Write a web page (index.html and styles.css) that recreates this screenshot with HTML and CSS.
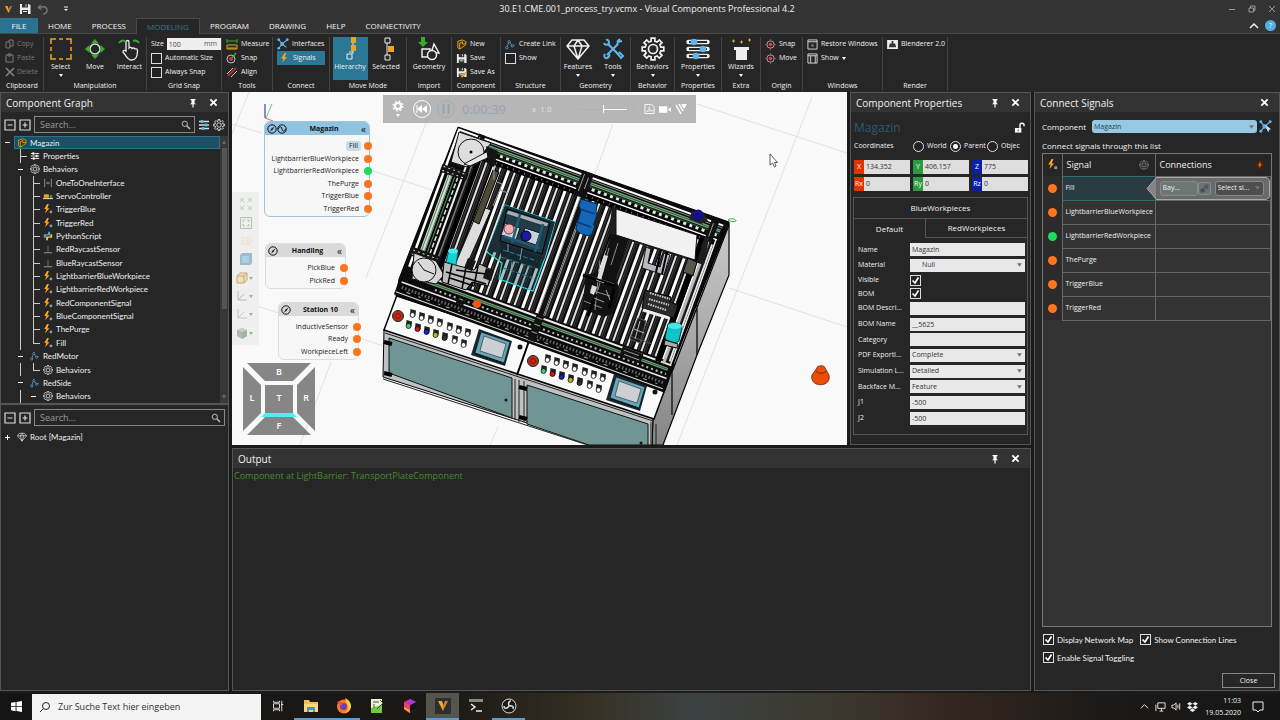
FILE: index.html
```html
<!DOCTYPE html>
<html lang="en">
<head>
    <meta charset="UTF-8">
    <meta name="viewport" content="width=device-width, initial-scale=1.0">
    <title>30.E1.CME.001_process_try.vcmx - Visual Components Professional 4.2</title>
    <link rel="stylesheet" href="styles.css">
</head>
<body>
    <!-- shared icons -->
    <svg class="defs" aria-hidden="true">
        <symbol id="i-pin" viewBox="0 0 10 10"><path d="M2.500 1h5v1l-1 .5V5L8 6.200H2L3.500 5V2.500l-1-.5z" fill="#fff"/><path d="M5 6v3.500" stroke="#fff" stroke-width="1.200"/></symbol>
        <symbol id="i-close" viewBox="0 0 10 10"><path d="M1.500 1.500l7 7M8.500 1.500l-7 7" stroke="#fff" stroke-width="2"/></symbol>
        <symbol id="i-minus" viewBox="0 0 12 12"><path d="M1 1h10v10H1zM3.500 6h5" fill="none" stroke="#ddd" stroke-width="1.200"/></symbol>
        <symbol id="i-plus" viewBox="0 0 12 12"><path d="M1 1h10v10H1zM3.500 6h5M6 3.500v5" fill="none" stroke="#ddd" stroke-width="1.200"/></symbol>
        <symbol id="i-search" viewBox="0 0 10 10"><circle cx="3.800" cy="3.800" r="2.600" fill="none" stroke="#bbb"/><path d="M5.800 5.800L9 9" stroke="#bbb" stroke-width="1.500"/></symbol>
        <symbol id="i-gear" viewBox="0 0 24 24"><path d="M19.800 10.100L22.800 10.100 22.800 13.900 19.800 13.900 18.900 16.200 21 18.300 18.300 21 16.200 18.900 13.900 19.800 13.900 22.800 10.100 22.800 10.100 19.800 7.800 18.900 5.700 21 3 18.300 5.100 16.200 4.200 13.900 1.200 13.900 1.200 10.100 4.200 10.100 5.100 7.800 3 5.700 5.700 3 7.800 5.100 10.100 4.200 10.100 1.200 13.900 1.200 13.900 4.200 16.200 5.100 18.300 3 21 5.700 18.900 7.800z" fill="none" stroke="currentColor" stroke-width="1.700"/><circle cx="12" cy="12" r="4.500" fill="none" stroke="currentColor" stroke-width="1.700"/></symbol>
        <symbol id="i-sliders" viewBox="0 0 24 24"><path d="M2.500 5h19M2.500 12h19M2.500 19h19" stroke="#eee" stroke-width="4.500" stroke-linecap="round"/><path d="M3 5h18M3 12h18M3 19h18" stroke="#2a2a2a" stroke-width="1.800"/><circle cx="8" cy="5" r="3.300" fill="#5eb5ec"/><circle cx="17" cy="12" r="3.300" fill="#5eb5ec"/><circle cx="10" cy="19" r="3.300" fill="#5eb5ec"/></symbol>
        <symbol id="i-filter" viewBox="0 0 12 12"><path d="M1 2.500h10M1 6h10M1 9.500h10" stroke="#ddd" stroke-width="1.300"/><path d="M4 1v3M8 4.500v3M5 8v3" stroke="#5eb5ec" stroke-width="2.500"/></symbol>
        <symbol id="i-props" viewBox="0 0 12 12"><path d="M1 3h10M1 6h10M1 9h10" stroke="#ddd" stroke-width="1.200"/><path d="M4 1.500v3M8 4.500v3M4.500 7.500v3" stroke="#fff" stroke-width="2"/></symbol>
        <symbol id="i-part" viewBox="0 0 12 12"><path d="M2 2.500L7 1l4 2-.5 3.500L7 9 4 11l-2-1.500z" fill="#3b3210" stroke="#e5a91f"/><path d="M4 11V4.500l3-1.500v2.500h3.500" fill="none" stroke="#e5a91f"/></symbol>
        <symbol id="i-bolt" viewBox="0 0 12 12"><path d="M5.500 0L1.500 6.500h2.800L2.500 11.500l6-6.500H5.400L7.500 0z" fill="#ffa51f"/></symbol>
        <symbol id="i-sig" viewBox="0 0 12 12"><path d="M5 0L1.500 6h2.500L2.500 11l5.200-6H5.200L7 0z" fill="#ffa51f"/><path d="M8 8h3v3H8z" fill="#999"/></symbol>
        <symbol id="i-link" viewBox="0 0 12 12"><path d="M2 9l2.500-6L8 7.500l2.500-1" fill="none" stroke="#8aa" stroke-width=".8"/><g fill="#222" stroke="#4a9bd0"><circle cx="2" cy="9.500" r="1.300"/><circle cx="4.500" cy="3" r="1.300"/><circle cx="8" cy="7.500" r="1.300"/></g></symbol>
        <symbol id="i-iface" viewBox="0 0 12 12"><path d="M2 1v10M10 1v10" stroke="#888" stroke-width="1.200"/><path d="M4 6h4M5 4.500v3M7 4.500v3" stroke="#58a4d8" stroke-width=".8"/></symbol>
        <symbol id="i-servo" viewBox="0 0 12 12"><path d="M1 4h6v4H1z" fill="#f0a522"/><path d="M8 5h3v3H8z" fill="#3da03a"/><path d="M0 9h12" stroke="#ccc" stroke-width="1.500"/></symbol>
        <symbol id="i-python" viewBox="0 0 12 12"><path d="M6 1h2.500v4.500H3.500V8H1V4h5z" fill="#4d9fd8"/><path d="M6 11H3.800V6.500h5V4H11v4H6z" fill="#f5c242"/></symbol>
        <symbol id="i-ray" viewBox="0 0 12 12"><path d="M6 2v8" stroke="#777"/><path d="M1 10.500h10" stroke="#aaa"/></symbol>
        <symbol id="i-gem" viewBox="0 0 24 24"><path d="M6 3h12l5 6-11 13L1 9zM1 9h22M8 9l4 13 4-13M8 9l4-6 4 6" fill="none" stroke="currentColor" stroke-width="1.500" stroke-linejoin="round"/></symbol>
        <symbol id="i-net" viewBox="0 0 14 14"><path d="M2 2l4 5M12 2L6 7M6 7l-4 5M6 7l5 4" stroke="#5eb5ec" stroke-width="1.300"/><g fill="#5eb5ec"><circle cx="2" cy="2" r="1.600"/><circle cx="12" cy="2" r="1.600"/><circle cx="2" cy="12" r="1.600"/><circle cx="6" cy="7" r="2.300"/></g></symbol>
        <symbol id="i-save" viewBox="0 0 12 12"><path d="M1 1h9l1.500 1.500V11H1z" fill="#eee"/><path d="M3 1h6v3.500H3zM3 7h6v4H3z" fill="#333"/><path d="M7 1.500v2M4 8.500h4" stroke="#eee"/></symbol>
        <symbol id="i-target" viewBox="0 0 12 12"><circle cx="6" cy="6" r="4" fill="none" stroke="#aaa"/><circle cx="6" cy="6" r="2" fill="#d2424c"/><path d="M6 0v3M6 9v3M0 6h3M9 6h3" stroke="#c85058" stroke-width=".8"/></symbol>
        <symbol id="i-compass" viewBox="0 0 10 10"><circle cx="5" cy="5" r="4.200" fill="none" stroke="#111"/><path d="M7.500 2.500L5.500 6 3 7.500 4.500 4.500z" fill="#222"/></symbol>
    </svg>

    <header class="titlebar">
        <div class="quick">
            <svg width="9" height="9" viewBox="0 0 10 10"><path d="M1 1h3l2 6-1 2z" fill="#e8a020"/><path d="M6 7l3-6H7L5 5z" fill="#c8762a"/></svg>
            <button class="icon-btn" aria-label="Save"><svg width="12" height="12"><use href="#i-save"/></svg></button>
            <button class="icon-btn" aria-label="Undo"><svg width="11" height="11" viewBox="0 0 12 12"><path d="M4 1L1.500 4 5 6M2 4c5-2 9-1 9 3 0 2-2 3.500-4.500 4" fill="none" stroke="#777" stroke-width="1.500"/></svg></button>
            <button class="icon-btn more" aria-label="More"><svg width="6" height="6" viewBox="0 0 6 6"><path d="M1 1h4" stroke="#eee"/><path d="M1 3h4L3 5z" fill="#eee"/></svg></button>
        </div>
        <div class="doc-title">30.E1.CME.001_process_try.vcmx - Visual Components Professional 4.2</div>
        <div class="win-btns">
            <button class="icon-btn" aria-label="Minimize"><svg width="8" height="8" viewBox="0 0 8 8"><path d="M1 4.500h6" stroke="#999"/></svg></button>
            <button class="icon-btn" aria-label="Restore"><svg width="8" height="8" viewBox="0 0 8 8"><path d="M1 3h4.500v4H1zM2.500 3V1H7v4.500H5.500" fill="none" stroke="#999"/></svg></button>
            <button class="icon-btn" aria-label="Close window"><svg width="8" height="8" viewBox="0 0 8 8"><path d="M1 1l6 6M7 1L1 7" stroke="#999"/></svg></button>
        </div>
    </header>

    <nav class="tabs">
        <button class="file">FILE</button>
        <button>HOME</button>
        <button>PROCESS</button>
        <button class="active">MODELING</button>
        <button>PROGRAM</button>
        <button>DRAWING</button>
        <button>HELP</button>
        <button>CONNECTIVITY</button>
        <div class="help">
            <svg width="10" height="8" viewBox="0 0 10 8"><path d="M1 6l4-4 4 4" fill="none" stroke="#eee" stroke-width="1.500"/></svg>
            <span class="q">?</span>
        </div>
    </nav>

    <div class="ribbon">
        <section class="group">
            <div class="rows disabled">
                <button class="small" disabled><svg width="10" height="10" viewBox="0 0 10 10"><path d="M1 3h4v6H1zM4 3V1h4v6H5" fill="none" stroke="#777"/></svg>Copy</button>
                <button class="small" disabled><svg width="10" height="10" viewBox="0 0 10 10"><path d="M1 2h7v7H1zM3 1h3v2H3z" fill="none" stroke="#777"/></svg>Paste</button>
                <button class="small" disabled><svg width="10" height="10" viewBox="0 0 10 10"><path d="M1 1l8 8M9 1L1 9" stroke="#888" stroke-width="1.500"/></svg>Delete</button>
            </div>
            <h3>Clipboard</h3>
        </section>
        <section class="group">
            <div class="bigs">
                <button class="big"><svg viewBox="0 0 24 24"><path d="M2 7V2h5M10 2h4M17 2h5v5M22 10v4M22 17v5h-5M14 22h-4M7 22H2v-5M2 14v-4" fill="none" stroke="#f0a522" stroke-width="1.500"/></svg>Select<i class="caret"></i></button>
                <button class="big"><svg viewBox="0 0 24 24"><circle cx="12" cy="12" r="5" fill="none" stroke="#ddd" stroke-width="1.500"/><path d="M12 2l4 4.500H8zM12 22l4-4.500H8zM2 12l4.500-4v8zM22 12l-4.500-4v8z" fill="#35ac2c"/></svg>Move</button>
                <button class="big"><svg viewBox="0 0 24 24"><path d="M9 14V5c0-2 3-2 3 0v6c1-1 2.500-1 3 .5 1-1 2.500-.5 3 .5 1.500-.5 2.500 0 2.500 2 0 6-2 9-6 9-4 0-5-4-8.500-8 0-2 2-2 3-1z" fill="none" stroke="#eee" stroke-width="1.300"/><path d="M2 6c2-3 4-3 6-2M22 6c-2-3-4-3-6-2" fill="none" stroke="#35ac2c" stroke-width="2"/></svg>Interact</button>
            </div>
            <h3>Manipulation</h3>
        </section>
        <section class="group">
            <div class="rows">
                <label class="small size">Size<input type="text" value="100"><span class="unit">mm</span></label>
                <label class="small"><input type="checkbox">Automatic Size</label>
                <label class="small"><input type="checkbox">Always Snap</label>
            </div>
            <h3>Grid Snap</h3>
        </section>
        <section class="group">
            <div class="rows">
                <button class="small"><svg width="12" height="12" viewBox="0 0 12 12"><path d="M1 3h10M1 1v4M11 1v4" stroke="#35ac2c"/><path d="M1 7h10v4H1zM3 9v2M5 9v2M7 9v2M9 9v2" fill="none" stroke="#e5a91f"/></svg>Measure</button>
                <button class="small"><svg width="12" height="12" viewBox="0 0 12 12"><circle cx="5" cy="7" r="4" fill="none" stroke="#bbb"/><circle cx="5" cy="7" r="2" fill="#d22f3c"/><path d="M6 6l4-5" stroke="#35ac2c" stroke-width="1.500"/></svg>Snap</button>
                <button class="small"><svg width="12" height="12" viewBox="0 0 12 12"><path d="M1 8l6-6M5 11l6-6" stroke="#ccc"/><path d="M2 10l8-8" stroke="#d22f3c" stroke-width="1.500"/></svg>Align</button>
            </div>
            <h3>Tools</h3>
        </section>
        <section class="group">
            <div class="rows">
                <button class="small"><svg width="12" height="12"><use href="#i-net"/></svg>Interfaces</button>
                <button class="small on"><svg width="10" height="10"><use href="#i-bolt"/></svg>Signals</button>
            </div>
            <h3>Connect</h3>
        </section>
        <section class="group">
            <div class="bigs">
                <button class="big on"><svg viewBox="0 0 24 24"><path d="M15 2v15M15 15h-4" stroke="#eee"/><path d="M13 0h5v6h-5zM13 8h5v6h-5z" fill="#f0a522"/><path d="M9 17h5v5H9z" fill="#2a7796" stroke="#eee"/></svg>Hierarchy</button>
                <button class="big"><svg viewBox="0 0 24 24"><path d="M13 5v14" stroke="#eee"/><path d="M11 1h5v5h-5zM11 18h5v5h-5z" fill="#262626" stroke="#eee"/><path d="M14 9h6v6h-6z" fill="#f0a522"/></svg>Selected</button>
            </div>
            <h3>Move Mode</h3>
        </section>
        <section class="group">
            <div class="bigs">
                <button class="big"><svg viewBox="0 0 24 24"><path d="M4 0h4v5h3L6 10 1 5h3z" fill="#35ac2c"/><path d="M5 12h8v8H5z" fill="#262626" stroke="#eee" stroke-width="1.500"/><path d="M17 7l5 9h-8z" fill="none" stroke="#eee" stroke-width="1.500"/><circle cx="15" cy="18" r="4.500" fill="#262626" stroke="#eee" stroke-width="1.500"/></svg>Geometry</button>
            </div>
            <h3>Import</h3>
        </section>
        <section class="group">
            <div class="rows">
                <button class="small"><svg width="11" height="11"><use href="#i-part"/></svg>New</button>
                <button class="small"><svg width="11" height="11"><use href="#i-save"/></svg>Save</button>
                <button class="small"><svg width="11" height="11" viewBox="0 0 12 12"><use href="#i-save" width="12" height="12"/><path d="M6 11l5-5" stroke="#e5a91f" stroke-width="2"/></svg>Save As</button>
            </div>
            <h3>Component</h3>
        </section>
        <section class="group">
            <div class="rows">
                <button class="small"><svg width="11" height="11"><use href="#i-link"/></svg>Create Link</button>
                <label class="small"><input type="checkbox">Show</label>
            </div>
            <h3>Structure</h3>
        </section>
        <section class="group">
            <div class="bigs">
                <button class="big"><svg><use href="#i-gem"/></svg>Features<i class="caret"></i></button>
                <button class="big"><svg viewBox="0 0 24 24"><path d="M7 7l11 11M17 7L6 18" stroke="#5eb5ec" stroke-width="2.200"/><path d="M3 6c1 3 5 2 5-1 0-2-2-2.500-3-2M21 4l-4 1-1 3M19 2l-3 3M4 17c-2 2 0 5 2 4s3-2 2-4M16 16l4 5 2-2-4-4" fill="none" stroke="#5eb5ec" stroke-width="2"/></svg>Tools<i class="caret"></i></button>
            </div>
            <h3>Geometry</h3>
        </section>
        <section class="group">
            <div class="bigs"><button class="big"><svg><use href="#i-gear"/></svg>Behaviors<i class="caret"></i></button></div>
            <h3>Behavior</h3>
        </section>
        <section class="group">
            <div class="bigs"><button class="big"><svg><use href="#i-sliders"/></svg>Properties<i class="caret"></i></button></div>
            <h3>Properties</h3>
        </section>
        <section class="group">
            <div class="bigs"><button class="big"><svg viewBox="0 0 24 24"><path d="M5 10h15v3h-2v10H7V13H5z" fill="#eee"/><path d="M3 4h3M4.500 2.500v3M11 5h3M12.500 3.500v3M19 3h3M20.500 1.500v3" stroke="#e5a91f"/></svg>Wizards<i class="caret"></i></button></div>
            <h3>Extra</h3>
        </section>
        <section class="group">
            <div class="rows">
                <button class="small"><svg width="11" height="11"><use href="#i-target"/></svg>Snap</button>
                <button class="small"><svg width="11" height="11"><use href="#i-target"/></svg>Move</button>
            </div>
            <h3>Origin</h3>
        </section>
        <section class="group">
            <div class="rows">
                <button class="small"><svg width="11" height="11" viewBox="0 0 12 12"><path d="M1 1h10v10H1zM1 3h10" fill="none" stroke="#ddd"/><path d="M4 7l3-2v4z" fill="#35ac2c"/></svg>Restore Windows</button>
                <button class="small"><svg width="11" height="11" viewBox="0 0 12 12"><path d="M1 1h10v10H1zM1 3h10M4 3v8M9 3v8" fill="none" stroke="#ddd"/></svg>Show<i class="caret"></i></button>
            </div>
            <h3>Windows</h3>
        </section>
        <section class="group">
            <div class="rows">
                <button class="small"><svg width="11" height="9" viewBox="0 0 12 10"><path d="M0 0h12v10H0z" fill="#eee"/><path d="M2 8l1-4h6l1 4z" fill="#333"/><path d="M6 1v5" stroke="#333" stroke-width="2"/></svg>Blenderer 2.0</button>
            </div>
            <h3>Render</h3>
        </section>
    </div>

    <main class="workspace">
        <div class="left">
            <section class="panel graph">
                <header><h2>Component Graph</h2>
                    <button class="icon-btn" aria-label="Pin"><svg width="10" height="10"><use href="#i-pin"/></svg></button>
                    <button class="icon-btn" aria-label="Close"><svg width="9" height="9"><use href="#i-close"/></svg></button>
                </header>
                <div class="searchbar">
                    <button class="icon-btn" aria-label="Collapse"><svg width="12" height="12"><use href="#i-minus"/></svg></button>
                    <button class="icon-btn" aria-label="Expand"><svg width="12" height="12"><use href="#i-plus"/></svg></button>
                    <label class="search"><input type="text" placeholder="Search..."><svg width="10" height="10"><use href="#i-search"/></svg></label>
                    <svg width="12" height="12"><use href="#i-filter"/></svg>
                    <svg width="12" height="12"><use href="#i-gear"/></svg>
                </div>
                <div class="tree-wrap">
                    <ul class="tree">
                        <li class="selected"><button class="tg" aria-label="Collapse"></button><span><svg><use href="#i-part"/></svg>Magazin</span></li>
                        <li><i></i><i class="t"></i><span><svg><use href="#i-props"/></svg>Properties</span></li>
                        <li><i></i><button class="tg" aria-label="Collapse"></button><span><svg><use href="#i-gear"/></svg>Behaviors</span></li>
                        <li><i></i><i class="v"></i><i class="t"></i><span><svg><use href="#i-iface"/></svg>OneToOneInterface</span></li>
                        <li><i></i><i class="v"></i><i class="t"></i><span><svg><use href="#i-servo"/></svg>ServoController</span></li>
                        <li><i></i><i class="v"></i><i class="t"></i><span><svg><use href="#i-sig"/></svg>TriggerBlue</span></li>
                        <li><i></i><i class="v"></i><i class="t"></i><span><svg><use href="#i-sig"/></svg>TriggerRed</span></li>
                        <li><i></i><i class="v"></i><i class="t"></i><span><svg><use href="#i-python"/></svg>PythonScript</span></li>
                        <li><i></i><i class="v"></i><i class="t"></i><span><svg><use href="#i-ray"/></svg>RedRaycastSensor</span></li>
                        <li><i></i><i class="v"></i><i class="t"></i><span><svg><use href="#i-ray"/></svg>BlueRaycastSensor</span></li>
                        <li><i></i><i class="v"></i><i class="t"></i><span><svg><use href="#i-sig"/></svg>LightbarrierBlueWorkpiece</span></li>
                        <li><i></i><i class="v"></i><i class="t"></i><span><svg><use href="#i-sig"/></svg>LightbarrierRedWorkpiece</span></li>
                        <li><i></i><i class="v"></i><i class="t"></i><span><svg><use href="#i-sig"/></svg>RedComponentSignal</span></li>
                        <li><i></i><i class="v"></i><i class="t"></i><span><svg><use href="#i-sig"/></svg>BlueComponentSignal</span></li>
                        <li><i></i><i class="v"></i><i class="t"></i><span><svg><use href="#i-sig"/></svg>ThePurge</span></li>
                        <li><i></i><i class="v"></i><i class="l"></i><span><svg><use href="#i-sig"/></svg>Fill</span></li>
                        <li><i></i><button class="tg" aria-label="Collapse"></button><span><svg><use href="#i-link"/></svg>RedMotor</span></li>
                        <li><i></i><i class="v"></i><i class="l"></i><span><svg><use href="#i-gear"/></svg>Behaviors</span></li>
                        <li><i></i><button class="tg" aria-label="Collapse"></button><span><svg><use href="#i-link"/></svg>RedSide</span></li>
                        <li><i></i><i class="v"></i><button class="tg" aria-label="Collapse"></button><span><svg><use href="#i-gear"/></svg>Behaviors</span></li>
                    </ul>
                    <div class="scroll"><i class="up"></i><div class="thumb"></div><i class="down"></i></div>
                </div>
            </section>
            <section class="panel roots">
                <div class="searchbar">
                    <button class="icon-btn" aria-label="Collapse"><svg width="12" height="12"><use href="#i-minus"/></svg></button>
                    <button class="icon-btn" aria-label="Expand"><svg width="12" height="12"><use href="#i-plus"/></svg></button>
                    <label class="search"><input type="text" placeholder="Search..."><svg width="10" height="10"><use href="#i-search"/></svg></label>
                </div>
                <ul class="tree short">
                    <li><button class="tg plus" aria-label="Expand"></button><span><svg><use href="#i-gem"/></svg>Root [Magazin]</span></li>
                </ul>
            </section>
        </div>

        <section class="viewport">
            <svg class="scene" viewBox="232 92 615 353" preserveAspectRatio="xMidYMid slice">
                <defs>
                    <!-- aluminium slats of the table top -->
                    <pattern id="slats" width="15" height="40" patternUnits="userSpaceOnUse">
                        <rect width="15" height="40" fill="#080808"/>
                        <rect x="1" width="3" height="40" fill="#fff"/>
                        <rect x="5.500" width=".8" height="40" fill="#666"/>
                        <rect x="8" width="2" height="40" fill="#e4e4e4"/>
                        <rect x="11.500" width=".6" height="40" fill="#777"/>
                        <rect x="13.300" width=".5" height="40" fill="#555"/>
                    </pattern>
                    <linearGradient id="side" x1="0" y1="0" x2="0" y2="1"><stop offset="0" stop-color="#cdcdcd"/><stop offset="1" stop-color="#858585"/></linearGradient>
                    <g id="btn"><path d="M-2.500-4l5.500 1.500-.5 5-5.500-1z" fill="#222"/><circle cx="-.5" cy="2" r="2.400" fill="#fff" stroke="#000" stroke-width=".8"/></g>
                    <g id="lamp"><path d="M-2.500-4l5.500 1.500-.5 5-5.500-1z" fill="#222" stroke="none"/><circle cx="-.5" cy="2" r="2.500" stroke="#000" stroke-width=".7"/></g>
                    <g id="console">
                        <circle cx="398" cy="316" r="5.500" fill="#a3381f" stroke="#222"/><circle cx="398" cy="316" r="2.500" fill="#e01c14" stroke="#600" stroke-width=".6"/>
                        <use href="#btn" x="413" y="313"/><use href="#btn" x="422" y="316"/><use href="#btn" x="431" y="319"/><use href="#btn" x="440" y="322"/><use href="#btn" x="450" y="326"/><use href="#btn" x="459" y="329"/><use href="#btn" x="468" y="332"/>
                        <use href="#lamp" x="409" y="324" fill="#3fd070"/><use href="#lamp" x="418" y="327" fill="#e01010"/><use href="#lamp" x="427" y="330" fill="#1424c0"/><use href="#lamp" x="436" y="333" fill="#b8ba20"/><use href="#lamp" x="445" y="336" fill="#333"/><use href="#btn" x="455" y="339"/><use href="#btn" x="464" y="343"/>
                        <path d="M479 329l33 12-7 25-34-11z" fill="#152a30"/>
                        <path d="M481 332l29 10-6 21-29-10z" fill="#69a6ba" stroke="#000" stroke-width=".6"/>
                        <path d="M484 336l22 8-4 14-22-7z" fill="#ccd0d2" stroke="#222" stroke-width=".6"/>
                        <path d="M476 354l27 9" stroke="#111" stroke-width="1.500" stroke-dasharray="2 1.500"/>
                        <circle cx="520" cy="347" r="2.500" fill="#111"/>
                    </g>
                </defs>
                <rect x="232" y="92" width="615" height="353" fill="#f9f9f9"/>
                <g stroke="#dadada" stroke-width=".8" fill="none">
                    <path d="M249 92l-17 42M232 124l30 9M428 118l-62 160M370 170l62 20M331 362l-31 83M613 124l-18 50M812 97L677 445M697 104l150 49M729 288l118 39M232 298l56 18M362 339l22 7M498 427l-8 18"/>
                </g>
                <path d="M265 104v14" stroke="#1c1c9c"/><path d="M266 118l6-14" stroke="#49c049" stroke-width=".8"/><path d="M265 118l8 3" stroke="#d44" stroke-width=".8"/>

                <!-- cabinet -->
                <path d="M729 222v53l-32 80-34 90h-11l1-28 12-32 7-20z" fill="url(#side)" stroke="#000" stroke-width="1.200"/>
                <path d="M697 305v50M672 370v45M672 372l57-147" stroke="#000" stroke-width="1.200"/>
                <path d="M384 329l269 88-1 28h-56L383 377z" fill="#bfc2c2" stroke="#000"/>
                <path d="M389 338l123 40v40L389 373z" fill="#6f9694" stroke="#111"/>
                <path d="M527 385l121 39v21h-59l-62-21z" fill="#6f9694" stroke="#111"/>
                <path d="M515 379v41M519 380v42M524 381v41M651 422v23M656 424v21" stroke="#222" stroke-width="1"/>
                <path d="M385 333l268 88M383 379l214 69" stroke="#222" stroke-width="1"/>
                <path d="M384 342l8 2M384 373l8 2M519 387l8 2M519 417l8 2" stroke="#000" stroke-width="4"/>
                <circle cx="506" cy="400" r="1.500" fill="#111"/><circle cx="641" cy="443" r="1.500" fill="#111"/>

                <path d="M397 295L384 330l270 89 14-38z" fill="#fafafa" stroke="#000" stroke-width="1.500"/>
                <path d="M529 341l-12 34" stroke="#000" stroke-width="2"/>
                <use href="#console"/>
                <use href="#console" x="135" y="45"/>

                <!-- table top -->
                <path d="M458 127l271 95-59 150-4 14-270-90 3-17z" fill="#0b0b0b" stroke="#000"/>
                <g transform="translate(458 127) rotate(20)">
                    <rect x="26" y="20" width="256" height="136" fill="url(#slats)"/>
                    <path d="M142 18v140" stroke="#111" stroke-width="5"/><path d="M139 20v134M146 20v134" stroke="#999"/>
                    <!-- back rail -->
                    <path d="M1 2h282" stroke="#fff" stroke-width="2"/>
                    <path d="M1 4.500h282" stroke="#aaa" stroke-width=".7"/>
                    <path d="M24 8h258" stroke="#7aaa84" stroke-width="3"/>
                    <path d="M24 8h258" stroke="#1f4528" stroke-width=".7"/>
                    <path d="M30 13h250" stroke="#e8e8e8" stroke-width="3" stroke-dasharray="3 3.500"/>
                    <path d="M24 17.500h258" stroke="#fff" stroke-width="1.500"/>
                    <path d="M24 11h258" stroke="#2d5e38" stroke-width="1"/>
                    <path d="M26 21h256" stroke="#000" stroke-width="5"/>
                    <path d="M30 21h250" stroke="#777" stroke-width="2" stroke-dasharray="1 5"/>
                    <path d="M132 -2h12v26h-12zM22 -1h7v26h-7zM270 0h8v22h-8z" fill="#111"/>
                    <path d="M135 1v18M140 3v12M24 2v18M273 3v14" stroke="#ccc" stroke-width=".7"/>
                    <!-- left rail -->
                    <path d="M2 2v160" stroke="#fff" stroke-width="2.500"/>
                    <path d="M9 40v96" stroke="#d9d9d9" stroke-width="5"/>
                    <path d="M8 40v96M11 40v96M14 40v96" stroke="#4f8d5c" stroke-width="1"/>
                    <path d="M17 40v96" stroke="#ddd" stroke-width="1.500" stroke-dasharray="5 2"/>
                    <path d="M21 30v118" stroke="#eee" stroke-width="2"/>
                    <path d="M26 24v130" stroke="#777" stroke-width="1.500"/>
                    <path d="M31 24v128" stroke="#000" stroke-width="5"/>
                    <path d="M-2 40h28v8H-2zM-3 128h32v9H-3z" fill="#151515"/>
                    <path d="M0 42h24M0 46h22M0 131h26M0 135h22" stroke="#ddd" stroke-width="1" stroke-dasharray="2 3"/>
                    <!-- front rails -->
                    <rect x="-3" y="148" width="288" height="31" fill="#0b0b0b"/>
                    <path d="M30 151h252" stroke="#eee" stroke-width="2"/>
                    <path d="M18 156h262" stroke="#73a27b" stroke-width="3"/>
                    <path d="M18 156h262" stroke="#1f4528" stroke-width=".7"/>
                    <path d="M34 161h246" stroke="#bbb" stroke-width="2" stroke-dasharray="2 3"/>
                    <path d="M0 165h282" stroke="#e9e9e9" stroke-width="1.500"/>
                    <path d="M2 170h280" stroke="#666" stroke-width="3" stroke-dasharray="1.500 2"/>
                    <path d="M8 173h272" stroke="#aaa" stroke-width="1" stroke-dasharray="4 9 2 6"/>
                    <path d="M-2 176h284" stroke="#ddd" stroke-width="1"/>
                    <path d="M138 148h8v28h-8zM58 158h8v8h-8zM230 150h22v10h-22z" fill="#111"/>
                    <path d="M139 152h6M139 159h6M139 167h6M60 161h4M232 153h16M234 157h16" stroke="#999"/>
                    <!-- right rails -->
                    <path d="M268 22v130" stroke="#000" stroke-width="6"/>
                    <path d="M274 22v130" stroke="#bcbcbc" stroke-width="3"/><path d="M281 18v132" stroke="#eee" stroke-width="1.500"/>
                </g>

                <!-- deflection wheels -->
                <path d="M459 132l32 11-8 10-16 14-16-5z" fill="#dcdcdc" stroke="#111"/>
                <circle cx="471" cy="152" r="13" fill="#dedede" stroke="#111"/><circle cx="471" cy="152" r="1.500"/>
                <path d="M464 164l28-15 4 5-26 12z" fill="#e8e8e8" stroke="#111"/>
                <path d="M414 253l22 8 8 14-8 9-24-5z" fill="#d6d6d6" stroke="#111"/>
                <circle cx="424" cy="270" r="12" fill="#dadada" stroke="#111"/><path d="M418 262l6 8 10 4" fill="none" stroke="#111"/>

                <!-- pneumatic parts on the left side -->
                <path d="M480 206l11 4-30 68-10-4z" fill="#ddd" stroke="#111"/>
                <path d="M493 170l6 2-20 52-6-3z" fill="#4d4a38" stroke="#000"/>
                <path d="M494 154v26M497 182l5 2-9 22M500 190l8 3" fill="none" stroke="#999"/>
                <path d="M486 146l12 5-4 16-6-3z" fill="#141414"/>
                <path d="M444 262l30 8 6-6 12 6-4 16-16-4-6 8-24-8z" fill="#bbb" stroke="#000"/>
                <path d="M446 272l40 12M452 264l-4 20M466 267l-4 22M478 266l-4 20M456 270l30 4M450 278l24 8" stroke="#000" stroke-width="1.500"/>
                <path d="M468 258l8 3-4 10-8-3zM486 268l8 3-3 10-8-3z" fill="#161616"/>
                <path d="M449 250l9 2-2 13-10-3z" fill="#12d2d8" stroke="#066"/>
                <ellipse cx="453" cy="251" rx="5" ry="2.500" fill="#4de8ec"/>

                <!-- selected gripper plate -->
                <path d="M505 205l50 17-9 33-13 36-34-12 3-16-15-11z" fill="#0d3a48" fill-opacity=".35" stroke="#1fdfe8" stroke-width="1.200"/>
                <path d="M505 205l50 17-11 38-57-9z" fill="#1d2d38"/>
                <path d="M507 209l43 14-8 31-42-13z" fill="#223c4a" stroke="#000"/>
                <path d="M508 210l41 13-2 4-41-13z" fill="#9fb0b8" stroke="#111" stroke-width=".7"/>
                <path d="M505 223l15 5-4 12-15-5zM525 228l15 5-4 12-15-5z" fill="#c6d4da" stroke="#0c1a22"/>
                <path d="M520 214l-8 29M543 224l-8 28M503 236l36 12" stroke="#1f5a76" stroke-width="2.500"/>
                <circle cx="509" cy="229" r="5" fill="#efb0b6" stroke="#733"/><circle cx="526" cy="236" r="5" fill="#1b1b9c" stroke="#002"/>
                <path d="M500 243l42 14-3 12-38-12z" fill="#16262f"/>
                <path d="M503 250l34 11M501 257l34 11M503 268l30 10" stroke="#277587" stroke-width="1.200" stroke-dasharray="5 2"/>
                <path d="M508 244v8M522 248l-2 12M512 262l-2 14" stroke="#8fb4c0" stroke-width=".8"/>

                <!-- blue vessel -->
                <path d="M581 199l16 5-1 8 2 4-6 18c-3 4-16-1-16-6l5-18-2-4z" fill="#1565b8" stroke="#05264d"/>
                <path d="M580 209l15 5M577 222l14 5" stroke="#0a3c74" stroke-width="1.500"/>
                <path d="M597 213l5 2-4 12-5-2z" fill="#222"/>

                <!-- light barrier screen -->
                <path d="M612 206l6 2-1 27 80 26 8-25 4 2-5 27-95-31z" fill="#1e1e1e"/>
                <path d="M616 209l81 26-2 25-79-25z" fill="#f1f1f1" stroke="#111"/>

                <!-- pick and place unit -->
                <path d="M611 234l18 5-13 38 3 12-5 24-10 4-22-8 4-34 14-4z" fill="#121212"/>
                <path d="M609 248l-11 42M618 243l-7 22M586 275l28 9M590 290l20 6M600 260l-5 50M584 301l18 7" stroke="#8d8d8d" stroke-width="1"/>
                <path d="M604 255l4 1-7 24-4-1zM592 285l5 2-3 8-4-2z" fill="#ddd"/>
                <path d="M583 275l32 11M588 316l8-22M609 308l5-19" stroke="#000" stroke-width="3"/>
                <path d="M596 280l8 3M594 298l10 4M606 290l4 10" stroke="#ccc" stroke-width=".8"/>

                <!-- conveyor modules -->
                <path d="M646 247l5 2-3 14 12 4 4-14 6 2-6 20-22-7z" fill="#b9b9c4" stroke="#111"/>
                <path d="M661 250l-5 22M667 252l-5 22" stroke="#000" stroke-width="2"/>
                <path d="M688 258l9 4-4 14-10-4z" fill="#57584a" stroke="#000"/>
                <path d="M645 290l26 7-1 5 8 3-4 13-32-10z" fill="#2a2a2a" stroke="#000"/>
                <path d="M650 293l20 6M649 299l20 6M648 304l18 6" stroke="#ccc" stroke-width="2" stroke-dasharray="1.500 1"/>
                <path d="M643 310l26 8" stroke="#eee" stroke-width="3"/>
                <path d="M638 318l8 3-6 22-10-4zM630 336l22 8" fill="#161616" stroke="#555"/>
                <path d="M640 321l-5 18M634 329l10 4" stroke="#bbb"/>
                <path d="M668 324c4-3 13-1 14 3l-3 14c-3 3-12 1-14-3z" fill="#12c4c8" stroke="#044"/>
                <ellipse cx="675" cy="326" rx="7" ry="3" fill="#4ae6e8"/>
                <path d="M665 340l13 4-1 4-13-3z" fill="#aaa" stroke="#111"/>

                <path d="M692 211l12 2 4 8-7 3-12-5z" fill="#222"/><circle cx="698" cy="215" r="5.500" fill="#11118a"/>
                <path d="M728 220c4-3 9 0 8 1s-5 1-8-1z" fill="none" stroke="#3cba3c"/>
                <circle cx="477" cy="304" r="4" fill="#f2570f"/>

                <!-- cone -->
                <path d="M817 368c0-3 8-3 8 0l4 7c3 13-20 13-17 0z" fill="#ec4d06" stroke="#6a2000" stroke-width=".8"/>
                <path d="M816 371c2 3 8 3 10 0" fill="none" stroke="#6a2000" stroke-width=".8"/>
                <path d="M770 154v11l2.500-2 2 4 1.500-1-1.500-3.500h3z" fill="#fff" stroke="#333" stroke-width=".8"/>
            </svg>

            <div class="playbar">
                <button class="icon-btn cog" aria-label="Settings"><svg width="12" height="18" viewBox="0 0 12 18"><circle cx="6" cy="6" r="3" fill="none" stroke="#fff" stroke-width="2"/><circle cx="6" cy="6" r="4.800" fill="none" stroke="#fff" stroke-width="1.500" stroke-dasharray="1.900 1.870"/><path d="M4 14h4l-2 3z" fill="#fff"/></svg></button>
                <button class="icon-btn" aria-label="Reset"><svg width="20" height="20" viewBox="0 0 20 20"><circle cx="10" cy="10" r="8.500" fill="none" stroke="#fff"/><path d="M10 6v8l-5-4zM15 6v8l-5-4z" fill="#fff"/><path d="M5 6v8" stroke="#fff"/></svg></button>
                <button class="icon-btn" aria-label="Pause"><svg width="20" height="20" viewBox="0 0 20 20"><circle cx="10" cy="10" r="8.500" fill="none" stroke="#9daeb6"/><path d="M7.500 5v10M12.500 5v10" stroke="#8fa8b3" stroke-width="2"/></svg></button>
                <span class="clock">0:00:39</span>
                <span class="speed">x&nbsp; 1.0</span>
                <span class="sign">-</span>
                <input type="range" min="0" max="10" value="5" aria-label="Simulation speed">
                <span class="sign">+</span>
                <svg width="11" height="12" viewBox="0 0 12 12"><path d="M1 1h7l3 3v7H1z" fill="none" stroke="#fff"/><path d="M3 9c2-2 3-4 3-6M6 5c0 2 2 3 4 3M3 9c2-1 4-1 6-1" fill="none" stroke="#fff" stroke-width=".8"/></svg>
                <svg width="12" height="10" viewBox="0 0 13 10"><path d="M0 2h9v7H0zM10 5l3-2v5l-3-2z" fill="#fff"/></svg>
                <svg width="12" height="12" viewBox="0 0 12 12"><path d="M1 2l5 9M4 1l4 7M7 1l2 4" stroke="#fff" stroke-width="1.500"/><path d="M8 1h4l-3 5z" fill="#fff"/></svg>
            </div>

            <div class="viewtools">
                <svg viewBox="0 0 12 12"><path d="M1 4V1h3M8 1h3v3M11 8v3H8M4 11H1V8M1 1l3.500 3.500M11 1L7.500 4.500M11 11L7.500 7.500M1 11l3.500-3.500" fill="none" stroke="#b4d8ae"/></svg>
                <svg viewBox="0 0 12 12"><path d="M.5.5h11v11H.5z" fill="none" stroke="#b4c0b4"/><path d="M3 5V3h2M7 3h2v2M9 7v2H7M5 9H3V7" fill="none" stroke="#a5cba2"/></svg>
                <svg viewBox="0 0 12 12"><path d="M1 3h4M1 6h4M1 9h10M7 3h4v4H7z" fill="none" stroke="#f1dfc0"/></svg>
                <svg viewBox="0 0 12 12"><path d="M0 2l2-2h10v10l-2 2H0z" fill="#9dbccb"/><path d="M2 3h7v7H2z" fill="#aed0e2"/></svg>
                <svg viewBox="0 0 18 12"><path d="M1 4h7v7H1zM1 4l3-3h7v7L8 11M8 4l3-3" fill="#f1dfb7" stroke="#c0aa7c"/><path d="M13 5h4l-2 3z" fill="#aaa"/></svg>
                <svg viewBox="0 0 18 12"><path d="M2 1v9h9M2 10l6-6" fill="none" stroke="#bbb"/><path d="M13 5h4l-2 3z" fill="#aaa"/></svg>
                <svg viewBox="0 0 18 12"><path d="M2 1v9" stroke="#a8cfa8"/><path d="M2 10h9M2 10l6-6" stroke="#e0bcbc"/><path d="M13 5h4l-2 3z" fill="#aaa"/></svg>
                <svg viewBox="0 0 18 12"><path d="M1 3l5-2 5 2v6l-5 3-5-3z" fill="#b4b8b4"/><path d="M6 5v7l5-3V3z" fill="#9abaa0"/><path d="M1 3l5-2 5 2-5 2z" fill="#cdcdc2"/><path d="M13 5h4l-2 3z" fill="#aaa"/></svg>
            </div>

            <article class="node magazin">
                <header><svg><use href="#i-compass"/></svg><svg viewBox="0 0 10 10"><circle cx="5" cy="5" r="4.200" fill="none" stroke="#111"/><path d="M1 5c2-3 3-3 4 0s2 3 4 0" fill="none" stroke="#111"/></svg><b>Magazin</b><span>«</span></header>
                <ul><li><em>Fill</em></li><li>LightbarrierBlueWorkpiece</li><li class="green">LightbarrierRedWorkpiece</li><li>ThePurge</li><li>TriggerBlue</li><li>TriggerRed</li></ul>
            </article>
            <article class="node handling">
                <header><svg><use href="#i-compass"/></svg><b>Handling</b><span>«</span></header>
                <ul><li>PickBlue</li><li>PickRed</li></ul>
            </article>
            <article class="node station">
                <header><svg><use href="#i-compass"/></svg><b>Station 10</b><span>«</span></header>
                <ul><li>InductiveSensor</li><li>Ready</li><li>WorkpieceLeft</li></ul>
            </article>

            <svg class="cube" viewBox="0 0 72 72">
                <path d="M4 0h64L50 18H22zM0 4l18 18v28L0 68zM72 4v64L54 50V22zM4 72l18-18h28l18 18zM22 22h28v28H22z" fill="#868686"/>
                <path d="M18 54l4-4h28l4 4z" fill="#4cf0f6"/>
                <g><text x="36" y="12">B</text><text x="9" y="38">L</text><text x="36" y="38">T</text><text x="63" y="38">R</text><text x="36" y="66">F</text></g>
            </svg>
        </section>

        <section class="panel props">
            <header><h2>Component Properties</h2>
                <button class="icon-btn" aria-label="Pin"><svg width="10" height="10"><use href="#i-pin"/></svg></button>
                <button class="icon-btn" aria-label="Close"><svg width="9" height="9"><use href="#i-close"/></svg></button>
            </header>
            <div class="comp-name"><span>Magazin</span><svg width="11" height="12" viewBox="0 0 12 12"><path d="M1 6h7v5H1z" fill="#fff"/><path d="M6.500 6V3c0-3 4.500-3 4.500 0v1" fill="none" stroke="#fff" stroke-width="1.500"/><path d="M4.500 7.500v2" stroke="#333"/></svg></div>
            <div class="coords">
                <span>Coordinates</span>
                <label><input type="radio" name="coord">World</label>
                <label><input type="radio" name="coord" checked>Parent</label>
                <label><input type="radio" name="coord">Objec</label>
            </div>
            <div class="xyz">
                <label class="x"><b>X</b><input type="text" value="134.352"></label>
                <label class="y"><b>Y</b><input type="text" value="406.157"></label>
                <label class="z"><b>Z</b><input type="text" value="775"></label>
                <label class="x"><b>Rx</b><input type="text" value="0"></label>
                <label class="y"><b>Ry</b><input type="text" value="0"></label>
                <label class="z"><b>Rz</b><input type="text" value="0"></label>
            </div>
            <div class="tabbox">
                <button class="wide">BlueWorkpieces</button>
                <div class="pair"><button class="current">Default</button><button>RedWorkpieces</button></div>
                <div class="fields">
                    <label for="f-name">Name</label><input id="f-name" type="text" value="Magazin">
                    <label for="f-mat">Material</label><select id="f-mat" class="indent"><option>Null</option></select>
                    <label for="f-vis">Visible</label><input id="f-vis" type="checkbox" checked>
                    <label for="f-bom">BOM</label><input id="f-bom" type="checkbox" checked>
                    <label for="f-desc">BOM Descri...</label><input id="f-desc" type="text">
                    <label for="f-bname">BOM Name</label><input id="f-bname" type="text" value="__5625">
                    <label for="f-cat">Category</label><input id="f-cat" type="text">
                    <label for="f-pdf">PDF ExportI...</label><select id="f-pdf"><option>Complete</option></select>
                    <label for="f-sim">Simulation L...</label><select id="f-sim"><option>Detailed</option></select>
                    <label for="f-back">Backface M...</label><select id="f-back"><option>Feature</option></select>
                    <label for="f-j1">J1</label><input id="f-j1" type="text" value="-500">
                    <label for="f-j2">J2</label><input id="f-j2" type="text" value="-500">
                </div>
            </div>
        </section>

        <section class="panel output">
            <header><h2>Output</h2>
                <button class="icon-btn" aria-label="Pin"><svg width="10" height="10"><use href="#i-pin"/></svg></button>
                <button class="icon-btn" aria-label="Close"><svg width="9" height="9"><use href="#i-close"/></svg></button>
            </header>
            <p>Component at LightBarrier: TransportPlateComponent</p>
        </section>

        <section class="panel signals">
            <header><h2>Connect Signals</h2>
                <button class="icon-btn" aria-label="Close"><svg width="9" height="9"><use href="#i-close"/></svg></button>
            </header>
            <div class="comp-row">
                <label for="comp">Component</label>
                <select id="comp"><option>Magazin</option></select>
                <svg width="13" height="13" viewBox="0 0 14 14"><use href="#i-net" width="14" height="14"/><path d="M7 5l6 5-3 .5 1 3-2-2z" fill="#ddd"/></svg>
            </div>
            <p>Connect signals through this list</p>
            <div class="list">
                <table>
                    <thead><tr>
                        <th class="c-dot"><svg width="11" height="11"><use href="#i-sig"/></svg></th>
                        <th class="c-sig"><div><span>Signal</span><svg class="dim" width="10" height="10"><use href="#i-gear"/></svg></div></th>
                        <th><div><span>Connections</span><svg width="10" height="10" viewBox="0 0 12 12"><circle cx="6" cy="6" r="5.500" fill="#4a2014"/><path d="M6.500 1.500L3.500 6.500h2L4.500 10l4-5H6.500z" fill="#d38016"/></svg></div></th>
                    </tr></thead>
                    <tbody>
                        <tr class="active"><td><i class="dot"></i></td><td>Fill</td><td class="conn">
                            <div class="callout">
                                <svg width="10" height="23" viewBox="0 0 10 23"><path d="M10 1L1 11.500 10 22" fill="#858585" stroke="#aaa"/></svg>
                                <select class="bay" aria-label="Component"><option>Bay...</option></select>
                                <svg width="13" height="13" viewBox="0 0 14 14"><rect x=".5" y=".5" width="13" height="13" rx="2" fill="#6b7273" stroke="#8b9192"/><circle cx="5" cy="9" r="2.500" fill="#4b5052"/><circle cx="9" cy="5" r="2.500" fill="#4b5a68"/></svg>
                                <select aria-label="Signal"><option>Select si...</option></select>
                            </div>
                        </td></tr>
                        <tr><td><i class="dot"></i></td><td>LightbarrierBlueWorkpiece</td><td></td></tr>
                        <tr><td><i class="dot green"></i></td><td>LightbarrierRedWorkpiece</td><td></td></tr>
                        <tr><td><i class="dot"></i></td><td>ThePurge</td><td></td></tr>
                        <tr><td><i class="dot"></i></td><td>TriggerBlue</td><td></td></tr>
                        <tr><td><i class="dot"></i></td><td>TriggerRed</td><td></td></tr>
                    </tbody>
                </table>
            </div>
            <div class="checks">
                <label><input type="checkbox" checked>Display Network Map</label>
                <label><input type="checkbox" checked>Show Connection Lines</label>
                <label><input type="checkbox" checked>Enable Signal Toggling</label>
            </div>
            <button class="close-btn">Close</button>
        </section>
    </main>

    <footer class="taskbar">
        <button class="start" aria-label="Start"><svg width="11" height="11" viewBox="0 0 12 12"><path d="M0 2l5-1v4.700H0zM6 1l6-1v5.700H6zM0 6.500h5v4.700l-5-1zM6 6.500h6V12l-6-1z" fill="#fff"/></svg></button>
        <label class="task-search"><svg width="12" height="12" viewBox="0 0 12 12"><circle cx="7" cy="5" r="3.500" fill="none" stroke="#222"/><path d="M4.500 7.500L1 11" stroke="#222"/></svg><input type="text" placeholder="Zur Suche Text hier eingeben"></label>
        <button class="app" aria-label="Task view"><svg class="sm" viewBox="0 0 16 16"><path d="M2 5h8v6H2zM2 1v2h8V1M2 15v-2h8v2M13 1v14M12 6h3" fill="none" stroke="#ddd" stroke-width="1.300"/></svg></button>
        <button class="app run" aria-label="Explorer"><svg viewBox="0 0 16 16"><path d="M1 2h5l1 2h8v10H1z" fill="#f3c04b"/><path d="M1 6h14v8H1z" fill="#fad978"/><path d="M4 9h8v5h-2v-2H6v2H4z" fill="#3b96d8"/></svg></button>
        <button class="app run" aria-label="Firefox"><svg viewBox="0 0 16 16"><circle cx="8" cy="8.500" r="7" fill="#ff7a1a"/><path d="M9 0c5 3 6 5 6 9-1 3-4 6-7 6 4-2 5-6 3-9z" fill="#ffcb3a"/><circle cx="7.500" cy="8.500" r="3.500" fill="#6a3fc4"/><path d="M1 4c2-1 4 0 6 1L5 8z" fill="#ff4a3a"/></svg></button>
        <button class="app" aria-label="Notepad++"><svg viewBox="0 0 16 16"><path d="M2 1h11v14H2z" fill="#eef2dc"/><path d="M2 10l11-3v8H2z" fill="#78c740"/><path d="M4 4h6M5 6v4M11 2l3 3-6 6" fill="none" stroke="#3a5a20"/></svg></button>
        <button class="app" aria-label="Cube"><svg viewBox="0 0 16 16"><path d="M2 4l6-3 6 3v7l-6 4-6-4z" fill="#e9296b"/><path d="M2 4l6 3v8l-6-4z" fill="#e8407a"/><path d="M8 7l6-3v7l-6 4z" fill="#141414"/><path d="M2 9l6 3v3l-6-4z" fill="#f3a024"/><path d="M8 1l6 3-6 3-3-2z" fill="#9a3fe0"/></svg></button>
        <button class="app run focus" aria-label="Visual Components"><svg viewBox="0 0 16 16"><path d="M0 0h16v16H0z" fill="#2d2d33"/><path d="M3 3h4l2 6-1 4z" fill="#f2a81e"/><path d="M8 13l5-10h-3L8 8z" fill="#c8862a"/></svg></button>
        <button class="app" aria-label="Terminal"><svg viewBox="0 0 16 16"><path d="M1 1h14v3H1z" fill="#888"/><path d="M3 6l4 3-4 3M8 13h6" fill="none" stroke="#eee" stroke-width="1.500"/></svg></button>
        <button class="app run" aria-label="OBS"><svg viewBox="0 0 16 16"><circle cx="8" cy="8" r="7" fill="#1a1a1a" stroke="#ddd"/><path d="M8 8c-1-3 0-5 2-5M8 8c3-1 5 1 4 3M8 8c-2 3-5 3-5 0" fill="none" stroke="#ddd" stroke-width="1.500"/></svg></button>
        <div class="tray">
            <svg viewBox="0 0 12 12"><path d="M2 8l4-4 4 4" fill="none" stroke="#eee"/></svg>
            <svg viewBox="0 0 12 12"><path d="M3 2h8v6H3zM5 11h4M7 8v3M1 4v7" fill="none" stroke="#eee"/></svg>
            <svg viewBox="0 0 12 12"><path d="M1 4.500h2L5.500 2v8L3 7.500H1zM7.500 4v4M9.500 2.500v7" fill="none" stroke="#eee"/></svg>
            <svg viewBox="0 0 12 12"><path d="M3 1l3 2-3 2-3-2zM9 1l3 2-3 2-3-2zM3 5l3 2-3 2-3-2zM9 5l3 2-3 2-3-2zM6 8l3 2-3 2-3-2z" fill="#eee"/></svg>
            <div class="time">11:03<br>19.05.2020</div>
            <svg class="note" viewBox="0 0 12 12"><path d="M1 1h10v8H8l-2 2-2-2H1z" fill="none" stroke="#eee"/></svg>
        </div>
    </footer>
</body>
</html>
```
FILE: styles.css
```css
* {
    box-sizing: border-box;
}

body {
    margin: 0;
    height: 100vh;
    display: flex;
    flex-direction: column;
    overflow: hidden;
    background: #1b1b1b;
    color: #f0f0f0;
    font-family: "Open Sans", "Noto Sans", sans-serif;
    font-size: 7px;
    line-height: 10px;
}

.defs {
    display: none;
}

h2, h3, p, ul {
    margin: 0;
    padding: 0;
    font-weight: normal;
    list-style: none;
}

svg {
    flex: none;
}

button, input, select {
    font: inherit;
    color: inherit;
    margin: 0;
    padding: 0;
    border: none;
    border-radius: 0;
    background: none;
    min-width: 0;
}

button {
    display: flex;
    align-items: center;
    justify-content: center;
    white-space: nowrap;
}

input[type="checkbox"], input[type="radio"] {
    appearance: none;
    flex: none;
    width: 11px;
    height: 11px;
    border: 1px solid #ddd;
    background: #222;
}

input[type="checkbox"]:checked {
    background: url("data:image/svg+xml,%3Csvg xmlns='http://www.w3.org/2000/svg' viewBox='0 0 9 9'%3E%3Cpath d='M1.500 4.500L4 7 7.500 1.500' fill='none' stroke='%23fff' stroke-width='1.700'/%3E%3C/svg%3E") center / 9px 9px no-repeat #222;
}

input[type="radio"] {
    border-radius: 50%;
}

input[type="radio"]:checked {
    background: radial-gradient(#fff 2px, #222 3px);
}

select {
    appearance: none;
    background: url("data:image/svg+xml,%3Csvg xmlns='http://www.w3.org/2000/svg' viewBox='0 0 6 4'%3E%3Cpath d='M0 0h6L3 4z' fill='%23777'/%3E%3C/svg%3E") no-repeat right 3px center / 5px 4px #e8e8e8;
}

.caret {
    border: 2px solid transparent;
    border-top: 3px solid #fff;
    border-bottom: 0;
}

/* title bar and tabs */

.titlebar {
    height: 18px;
    background: #333;
    display: grid;
    grid-template-columns: 1fr auto 1fr;
    align-items: center;
    padding: 0 4px;
}

.quick {
    display: flex;
    align-items: center;
    gap: 4px;
}

.quick svg:first-child {
    margin-right: 2px;
}

.more {
    margin-left: 9px;
}

.doc-title {
    font-size: 9px;
    padding-left: 14px;
}

.win-btns {
    display: flex;
    justify-content: flex-end;
    gap: 12px;
}

.tabs {
    height: 16px;
    background: #333;
    border-bottom: 1px solid #4a4a4a;
    display: flex;
    font-size: 8px;
}

.tabs button {
    padding: 0 10px;
    color: #f4f4f4;
}

.tabs .file {
    background: #2a7390;
    width: 38px;
    padding: 0;
}

.tabs .active {
    background: #262626;
    color: #397690;
    border: 1px solid #4a4a4a;
    border-bottom: none;
    margin-bottom: -1px;
}

.help {
    margin-left: auto;
    display: flex;
    align-items: center;
    gap: 6px;
    padding-right: 4px;
}

.q {
    width: 11px;
    height: 11px;
    border-radius: 50%;
    background: #55aee0;
    text-align: center;
}

/* ribbon */

.ribbon {
    height: 58px;
    flex: none;
    background: #262626;
    display: grid;
    grid-template-columns: 43px 103px 75px 51px 57px 77px 45px 49px 60px 70px 44px 47px 39px 42px 80px 65px;
    padding: 3px 0 0 1px;
}

.group {
    display: flex;
    flex-direction: column;
    height: 54px;
    border-right: 1px solid #444;
}

.group h3 {
    text-align: center;
    margin-top: auto;
    font-size: 7px;
    white-space: nowrap;
}

.rows {
    padding: 0 4px;
}

.small {
    height: 14px;
    display: flex;
    align-items: center;
    justify-content: flex-start;
    gap: 3px;
    white-space: nowrap;
}

.disabled .small {
    color: #777;
    gap: 2px;
}

.small.on {
    background: #2a7796;
    width: 48px;
    padding-left: 3px;
}

.size input {
    width: 100%;
    height: 12px;
    background: #eee;
    color: #444;
    padding-left: 2px;
}

.size .unit {
    margin-left: -20px;
    color: #555;
}

.bigs {
    display: flex;
    justify-content: center;
    gap: 1px;
}

.big {
    flex-direction: column;
    justify-content: flex-start;
    width: 35px;
    height: 43px;
    line-height: 11px;
}

.big svg {
    width: 24px;
    height: 24px;
}

.big .caret {
    margin-top: 2px;
}

.big.on {
    background: #2a7796;
}

/* dockable panels */

.workspace {
    flex: 1;
    min-height: 0;
    display: grid;
    grid-template-columns: 229px minmax(0, 1fr) 181px 246px;
    grid-template-rows: minmax(0, 1fr) 243px;
    gap: 3px;
    padding-bottom: 2px;
}

.panel {
    background: #262626;
    border: 1px solid #555;
    display: flex;
    flex-direction: column;
    min-height: 0;
}

.panel header {
    height: 19px;
    flex: none;
    background: #333;
    display: flex;
    align-items: center;
    gap: 11px;
    padding: 0 10px 0 5px;
}

.panel h2 {
    font-size: 10px;
    margin-right: auto;
}

.left {
    grid-row: 1 / 3;
    display: flex;
    flex-direction: column;
    min-height: 0;
}

.graph {
    flex: 1;
}

.roots {
    height: 287px;
    flex: none;
}

.searchbar {
    display: flex;
    align-items: center;
    gap: 3px;
    padding: 4px 3px 3px;
}

.search {
    flex: 1;
    display: flex;
    align-items: center;
    height: 17px;
    border: 1px solid #888;
    padding: 0 3px 0 5px;
}

.search input {
    flex: 1;
    font-size: 9px;
}

.search input::placeholder {
    color: #999;
}

.tree-wrap {
    flex: 1;
    min-height: 0;
    display: flex;
}

.tree {
    flex: 1;
    display: flex;
    flex-direction: column;
    font-family: Lato, "Open Sans", sans-serif;
    font-size: 8px;
}

.tree.short {
    flex: none;
    height: 16px;
}

.tree li {
    flex: 1;
    display: flex;
    align-items: stretch;
}

.tree li > i, .tg {
    width: 13px;
    flex: none;
    position: relative;
}

.tree span {
    flex: 1;
    display: flex;
    align-items: center;
    gap: 3px;
    padding-left: 3px;
}

.tree svg {
    width: 10px;
    height: 10px;
}

.tree .selected span {
    background: #1d4e63;
    border: 1px solid #2a7390;
    padding-left: 2px;
}

.v::before, .t::before, .l::before {
    content: "";
    position: absolute;
    left: 6px;
    top: 0;
    bottom: 0;
    border-left: 1px solid #ccc;
}

.l::before {
    bottom: 50%;
}

.t::after, .l::after {
    content: "";
    position: absolute;
    left: 6px;
    right: 0;
    top: 50%;
    border-top: 1px solid #ccc;
}

.tg::before {
    content: "";
    width: 5px;
    height: 1px;
    background: #fff;
}

.tg.plus::before {
    height: 5px;
    background: linear-gradient(#fff, #fff) center / 5px 1px no-repeat, linear-gradient(#fff, #fff) center / 1px 5px no-repeat;
}

.scroll {
    width: 8px;
    background: #383838;
    display: flex;
    flex-direction: column;
    align-items: center;
    padding: 4px 0;
}

.thumb {
    width: 5px;
    height: 62%;
    margin-top: 4px;
    background: #555;
}

.up, .down {
    border: 2px solid transparent;
    border-bottom: 4px solid #666;
    border-top: 0;
}

.down {
    margin-top: auto;
    border-top: 4px solid #666;
    border-bottom: 0;
}

/* 3D view */

.viewport {
    position: relative;
    background: #f9f9f9;
    overflow: hidden;
    color: #222;
}

.scene {
    display: block;
    width: 100%;
    height: 100%;
}

.playbar {
    position: absolute;
    left: 151px;
    top: 3px;
    width: 313px;
    height: 28px;
    background: rgba(172, 172, 172, 0.88);
    color: #fff;
    display: flex;
    align-items: center;
    gap: 4px;
    padding: 0 9px;
}

.cog {
    margin-right: 4px;
}

.clock {
    font-size: 13px;
    color: #96a3b6;
    margin-left: 2px;
}

.speed {
    font-size: 8px;
    color: #dde4f6;
    margin: 0 18px 0 22px;
}

.sign {
    color: #9fb6bd;
    font-size: 9px;
}

.sign + svg {
    margin-left: 4px;
}

.playbar input {
    appearance: none;
    flex: 1;
    height: 8px;
    background: linear-gradient(90deg, #a0b4b6 50%, #fff 50%) center / 100% 1px no-repeat;
}

.playbar input::-webkit-slider-thumb {
    appearance: none;
    width: 1px;
    height: 8px;
    background: #fff;
}

.viewtools {
    position: absolute;
    left: 0;
    top: 100px;
    width: 27px;
    height: 153px;
    background: #efefef;
    display: flex;
    flex-direction: column;
    justify-content: space-around;
    padding: 3px 4px;
}

.viewtools svg {
    height: 12px;
    align-self: flex-start;
}

.viewtools svg:nth-child(-n+4) {
    align-self: center;
}

.node {
    position: absolute;
    background: rgba(246, 246, 246, 0.9);
    border: 1px solid #dcdcdc;
    border-radius: 6px;
}

.node header {
    height: 13px;
    border-radius: 5px 5px 0 0;
    background: #dadada;
    display: flex;
    align-items: center;
    padding: 0 3px 0 2px;
    color: #111;
}

.node header svg {
    width: 10px;
    height: 10px;
}

.node header b {
    flex: 1;
    text-align: center;
}

.node header span {
    font-size: 10px;
}

.node ul {
    display: flex;
    flex-direction: column;
    height: calc(100% - 13px);
    padding: 5px 0 1px;
    margin-right: -3px;
}

.node li {
    flex: 1;
    display: flex;
    align-items: center;
    justify-content: flex-end;
    gap: 5px;
}

.node li::after, .dot {
    content: "";
    width: 8px;
    height: 8px;
    border-radius: 50%;
    background: #fb7520;
}

.node li.green::after, .dot.green {
    background: #1bdc5e;
}

.node em {
    font-style: normal;
    background: #c6dce6;
    border-radius: 3px;
    padding: 0 3px;
    margin-right: -2px;
}

.magazin {
    left: 32px;
    top: 29px;
    width: 106px;
    height: 96px;
    border-color: #9fc6dc;
}

.magazin header {
    background: #90c3e0;
}

.handling {
    left: 33px;
    top: 151px;
    width: 81px;
    height: 46px;
}

.station {
    left: 46px;
    top: 210px;
    width: 81px;
    height: 58px;
}

.cube {
    position: absolute;
    left: 11px;
    bottom: 10px;
    width: 72px;
    height: 72px;
    fill: #fff;
    font-size: 9px;
    font-weight: 600;
    text-anchor: middle;
}

/* component properties */

.comp-name {
    display: flex;
    align-items: center;
    justify-content: space-between;
    height: 31px;
    padding: 0 5px 0 3px;
    font-size: 12px;
    color: #2b5b70;
}

.coords {
    display: grid;
    grid-template-columns: 59px 37px 37px 1fr;
    align-items: center;
    height: 12px;
    margin: -3px 0 8px 3px;
}

.coords label {
    display: flex;
    align-items: center;
    gap: 3px;
    overflow: hidden;
}

.xyz {
    display: grid;
    grid-template-columns: repeat(3, 1fr);
    gap: 3px;
    padding: 0 2px 0 3px;
}

.xyz label {
    display: flex;
    height: 14px;
    background: #dedede;
    color: #333;
}

.xyz b {
    width: 10px;
    flex: none;
    color: #fff;
    font-weight: normal;
    text-align: center;
    line-height: 14px;
}

.xyz .x b { background: #de3400; }
.xyz .y b { background: #2c9a40; }
.xyz .z b { background: #0b20a8; }

.xyz input {
    width: 100%;
    padding-left: 2px;
}

.tabbox {
    flex: 1;
    min-height: 0;
    display: flex;
    flex-direction: column;
    margin: 6px 2px 9px 2px;
    border: 1px solid #555;
    font-size: 8px;
}

.tabbox button {
    height: 20px;
}

.pair {
    display: grid;
    grid-template-columns: 41% 59%;
}

.pair button {
    border: 1px solid #555;
    border-right: none;
}

.pair .current {
    border-left: none;
    border-bottom: none;
}

.fields {
    flex: 1;
    display: grid;
    grid-template-columns: 52px 1fr;
    align-items: center;
    font-size: 7px;
    padding: 4px 2px 8px 4px;
}

.fields label {
    white-space: nowrap;
}

.fields input[type="text"], .fields select {
    height: 13px;
    background-color: #e8e8e8;
    color: #333;
    padding-left: 2px;
}

.fields .indent {
    padding-left: 12px;
}

/* output */

.output {
    grid-column: 2 / 4;
    grid-row: 2;
}

.output p {
    font-size: 9px;
    line-height: 16px;
    color: #468a2e;
    padding-left: 1px;
}

/* connect signals */

.signals {
    grid-column: 4;
    grid-row: 1 / 3;
    padding-bottom: 2px;
}

.comp-row {
    display: flex;
    align-items: center;
    height: 29px;
    gap: 2px;
    padding: 0 7px;
    font-size: 8px;
}

.comp-row label {
    width: 48px;
}

.comp-row select {
    flex: 1;
    height: 13px;
    border-radius: 3px;
    background-color: #95c8e2;
    color: #24424f;
    padding-left: 2px;
    font-size: 7px;
}

.signals > p {
    padding-left: 7px;
    font-size: 8px;
    line-height: 10px;
}

.list {
    flex: 1;
    margin: 2px 7px 0 7px;
    border: 1px solid #777;
    background: #333;
}

table {
    width: 100%;
    border-collapse: collapse;
    table-layout: fixed;
}

th {
    background: #262626;
    height: 22px;
    font-weight: normal;
    font-size: 9px;
    text-align: left;
    padding: 0 6px 0 4px;
    border-left: 1px solid #666;
}

th div {
    display: flex;
    align-items: center;
    justify-content: space-between;
}

.c-dot {
    width: 19px;
    border-left: none;
}

.c-sig {
    width: 93px;
}

.dim {
    color: #888;
}

td {
    height: 24px;
    padding: 0 0 0 3px;
    border: 1px solid #666;
}

td:first-child {
    border: none;
    padding-left: 5px;
    background: #2b2b2b;
}

.dot {
    display: block;
    width: 9px;
    height: 9px;
}

.active td:nth-child(2) {
    background: #2b3b42;
    border-top-color: #2f7070;
    border-bottom-color: #2f7070;
}

.conn {
    padding: 0;
}

.callout {
    position: relative;
    height: 23px;
    border: 1px solid #aaa;
    border-left: none;
    border-radius: 0 5px 5px 0;
    background: #6a6a6a;
    display: flex;
    align-items: center;
    padding-left: 4px;
}

.callout > svg:first-child {
    position: absolute;
    left: -10px;
    top: -1px;
}

.callout select {
    flex: 1;
    height: 15px;
    border: 1px solid #8a8a8a;
    border-radius: 3px;
    background-color: #4e4e4e;
    padding-left: 2px;
    margin: 0 5px 0 4px;
}

.callout .bay {
    flex: none;
    width: 38px;
    margin: 0;
    background-color: #6c7776;
}

.checks {
    display: flex;
    flex-wrap: wrap;
    gap: 7px;
    padding: 7px 4px 10px 8px;
    font-family: Lato, "Open Sans", sans-serif;
    font-size: 8px;
}

.checks label {
    display: flex;
    align-items: center;
    gap: 3px;
}

.close-btn {
    align-self: flex-end;
    width: 53px;
    height: 15px;
    border: 1px solid #888;
    margin-right: 4px;
}

/* windows taskbar */

.taskbar {
    height: 27px;
    flex: none;
    display: flex;
    background: linear-gradient(90deg, #141414, #1b1916 35%, #353023 46%, #3c4142 54%, #3c3a30 64%, #35271f 74%, #1c1a18 86%, #161616);
}

.start {
    width: 32px;
}

.task-search {
    width: 229px;
    margin-top: 1px;
    background: #f3f3f3;
    display: flex;
    align-items: center;
    gap: 7px;
    padding-left: 7px;
}

.task-search input {
    flex: 1;
    font-size: 9px;
}

.task-search input::placeholder {
    color: #333;
}

.app {
    width: 33px;
    border-bottom: 2px solid transparent;
}

.app svg {
    width: 16px;
    height: 16px;
}

.app .sm {
    width: 12px;
    height: 12px;
}

.run {
    border-color: #5c9ccc;
}

.focus {
    background: #55554e;
}

.tray {
    margin-left: auto;
    display: flex;
    align-items: center;
    gap: 5px;
    padding-right: 16px;
}

.tray svg {
    width: 11px;
    height: 11px;
}

.tray .note {
    width: 12px;
    height: 12px;
    margin-left: 6px;
}

.time {
    text-align: right;
    font-size: 7px;
    line-height: 12px;
    margin-left: 2px;
}
```
